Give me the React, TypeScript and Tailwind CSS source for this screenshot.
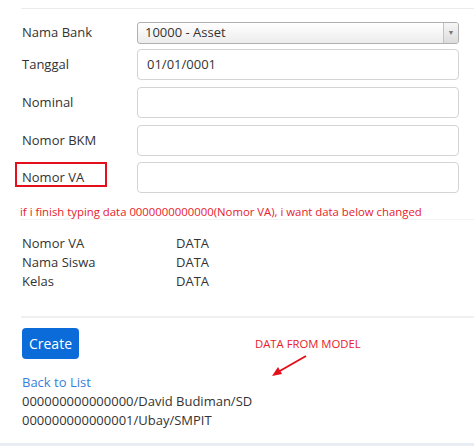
import React from "react";

const font = { fontFamily: '"Open Sans", "Noto Sans", sans-serif' };

function Input() {
  return <div className="h-[31px] w-[322px] rounded-[4px] border border-[#d4d4d4] bg-white" />;
}

export default function App() {
  return (
    <div className="relative h-[446px] w-[474px] overflow-hidden bg-white text-[13px] text-[#333]" style={font}>
      <div className="ml-[21px] mt-[8px] border-t border-[#ececec]" />
      <div className="pl-[22px]">
        <div className="mt-[13px] flex h-[22px] items-center">
          <div className="w-[115px]">Nama Bank</div>
          <div className="flex h-[22px] w-[322px] items-stretch overflow-hidden rounded-[3px] border border-[#b0b0b0] bg-gradient-to-b from-white to-[#ececec]">
            <div className="flex flex-1 items-center pl-[7px] text-[13px] text-[#333]">10000 - Asset</div>
            <div className="flex w-[15px] items-center justify-center border-l border-[#c4c4c4] bg-gradient-to-b from-[#f6f6f6] to-[#dcdcdc] text-[7px] text-[#777]">▼</div>
          </div>
        </div>
        <div className="mt-[5px] flex h-[31px] items-center">
          <div className="w-[115px]">Tanggal</div>
          <div className="flex h-[31px] w-[322px] items-center rounded-[4px] border border-[#d4d4d4] pl-[9px]">01/01/0001</div>
        </div>
        <div className="mt-[7px] flex h-[31px] items-center">
          <div className="w-[115px]">Nominal</div>
          <Input />
        </div>
        <div className="mt-[7px] flex h-[31px] items-center">
          <div className="w-[115px]">Nomor BKM</div>
          <Input />
        </div>
        <div className="mt-[6px] flex h-[31px] items-center">
          <div className="relative w-[115px]">
            Nomor VA
            <div className="absolute left-[-7px] top-[-6px] h-[25px] w-[92px] border-2 border-[#e3101b]" />
          </div>
          <Input />
        </div>
      </div>
      <div className="mt-[11px] pl-[20px] text-[11.35px] leading-[15px] text-[#e8202a]">
        if i finish typing data 0000000000000(Nomor VA), i want data below changed
      </div>
      <div className="ml-[20px] border-t border-[#f3f3f3]" />
      <div className="mt-[14px] pl-[22px] leading-[19px]">
        <div className="flex"><div className="w-[154px]">Nomor VA</div><div>DATA</div></div>
        <div className="flex"><div className="w-[154px]">Nama Siswa</div><div>DATA</div></div>
        <div className="flex"><div className="w-[154px]">Kelas</div><div>DATA</div></div>
      </div>
      <div className="ml-[21px] mt-[25px] border-t-2 border-[#f0f0f0]" />
      <div className="relative pl-[22px]">
        <div className="mt-[10px] flex h-[31px] w-[57px] items-center justify-center rounded-[4px] bg-[#0b6bd8] text-[14px] text-white">Create</div>
        <div className="mt-[14px] leading-[19px] text-[#3a7fd8]">Back to List</div>
        <div className="leading-[19px]">000000000000000/David Budiman/SD</div>
        <div className="leading-[19px]">000000000000001/Ubay/SMPIT</div>
        <div className="absolute left-[255px] top-[8px] text-[11.3px] leading-[15px] text-[#e8202a]">DATA FROM MODEL</div>
        <svg className="absolute left-[265px] top-[23px]" width="50" height="30" viewBox="0 0 50 30">
          <line x1="41" y1="5" x2="13" y2="21" stroke="#e3101b" strokeWidth="2" />
          <polygon points="7,25 13,16 17,23" fill="#e3101b" />
        </svg>
      </div>
      <div className="absolute bottom-0 left-0 h-[3px] w-full bg-[#e9eef5]" />
    </div>
  );
}
